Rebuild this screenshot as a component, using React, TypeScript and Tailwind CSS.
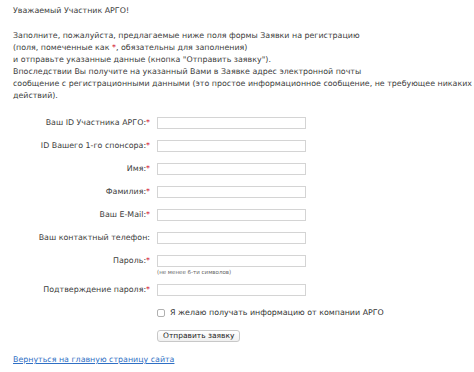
import React from "react";

const Star = () => <span className="text-[#d0021b]">*</span>;

const Field = ({ label, required, hint }: { label: string; required?: boolean; hint?: string }) => (
  <>
    <div className="h-[12px] flex items-center justify-end whitespace-nowrap">
      {label}
      {required ? <Star /> : null}
    </div>
    <div className="flex flex-col">
      <input
        type="text"
        className="h-[12px] w-[149px] border border-[#d4d4d4] bg-white outline-none"
      />
      {hint && (
        <div className="text-[5.5px] leading-[9px] text-[#666] pt-px">{hint}</div>
      )}
    </div>
  </>
);

export default function App() {
  return (
    <div
      className="w-[474px] h-[372px] bg-white text-[#3c3c3c] text-[7.9px] leading-[12px] pl-[13px] pt-[5px] overflow-hidden"
      style={{ fontFamily: '"DejaVu Sans", Verdana, sans-serif' }}
    >
      <p>Уважаемый Участник АРГО!</p>
      <p className="mt-[13px] whitespace-nowrap">
        Заполните, пожалуйста, предлагаемые ниже поля формы Заявки на регистрацию
        <br />
        (поля, помеченные как <Star />, обязательны для заполнения)
        <br />
        и отправьте указанные данные (кнопка "Отправить заявку").
        <br />
        Впоследствии Вы получите на указанный Вами в Заявке адрес электронной почты
        <br />
        сообщение с регистрационными данными (это простое информационное сообщение, не требующее никаких
        <br />
        действий).
      </p>

      <div className="mt-[15px] grid grid-cols-[137px_149px] gap-x-[7px] gap-y-[11px] items-start">
        <Field label="Ваш ID Участника АРГО:" required />
        <Field label="ID Вашего 1-го спонсора:" required />
        <Field label="Имя:" required />
        <Field label="Фамилия:" required />
        <Field label="Ваш E-Mail:" required />
        <Field label="Ваш контактный телефон:" />
        <Field label="Пароль:" required hint="(не менее 6-ти символов)" />
      </div>
      <div className="mt-[7px] grid grid-cols-[137px_149px] gap-x-[7px] items-start">
        <Field label="Подтверждение пароля:" required />
      </div>

      <div className="mt-[11px] ml-[144px] flex items-center gap-[5px] h-[12px] whitespace-nowrap">
        <span className="w-[8px] h-[8px] border border-[#b0b0b0] rounded-[2px] bg-white" />
        <span className="text-[#333]">Я желаю получать информацию от компании АРГО</span>
      </div>

      <div className="mt-[11px] ml-[144px]">
        <button className="h-[12px] px-[5px] border border-[#c8c8c8] rounded-[3px] bg-gradient-to-b from-white to-[#f0f0f0] text-[7.5px] leading-[10px] text-[#222] whitespace-nowrap">
          Отправить заявку
        </button>
      </div>

      <div className="mt-[12px]">
        <a href="#" className="text-[#2f6fc4] underline">
          Вернуться на главную страницу сайта
        </a>
      </div>
    </div>
  );
}
